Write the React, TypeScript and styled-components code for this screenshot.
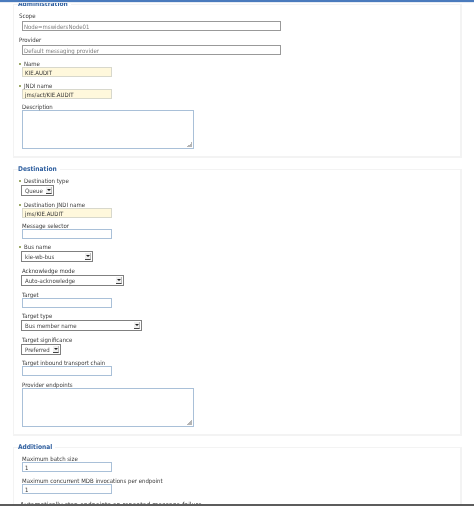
import styled, { createGlobalStyle } from "styled-components";

const GlobalStyle = createGlobalStyle`
   html, body {
      margin: 0;
      padding: 0;
      background: #fff;
   }
`;

const Page = styled.div`
   width: 474px;
   height: 506px;
   display: flex;
   flex-direction: column;
   overflow: hidden;
   background: #fff;
   font-family: "DejaVu Sans Condensed", "DejaVu Sans", Verdana, sans-serif;
   font-size: 6px;
   color: #3a3a3a;
   filter: blur(0.3px);
`;

const TopBar = styled.div`
   flex: none;
   height: 2px;
   background: #4a7bbd;
   border-bottom: 1px solid #e6ebf3;
`;

const Scroller = styled.div`
   flex: 1;
   min-height: 0;
   overflow: hidden;
   padding: 0 12px 0 13px;
`;

const Form = styled.form`
   margin-top: -4px;
   display: flex;
   flex-direction: column;
`;

const Panel = styled.fieldset<{ $last?: boolean }>`
   margin: 0 0 ${({ $last }) => ($last ? "0" : "6px")};
   padding: 3px 0 ${({ $last }) => ($last ? "0" : "7px")} 5px;
   min-width: 0;
   border: 1px solid #f3f3f3;
   border-right-width: 2px;
   border-bottom-width: 2px;
`;

const Legend = styled.legend`
   margin: 0 0 0 -1px;
   padding: 0 3px 0 0;
   font-size: 6.6px;
   line-height: 10px;
   font-weight: bold;
   color: #2f5f9f;
   background: #fff;
`;

const Field = styled.div<{ $after?: number }>`
   display: flex;
   flex-direction: column;
   align-items: flex-start;
   margin-bottom: ${({ $after }) => $after ?? 5}px;
`;

const Label = styled.label<{ $indent?: number; $gap?: number }>`
   display: block;
   position: relative;
   height: 8px;
   line-height: 7px;
   margin-left: ${({ $indent }) => $indent ?? 3}px;
   margin-bottom: ${({ $gap }) => $gap ?? -1}px;
   white-space: nowrap;
`;

const RequiredMark = styled.span`
   position: absolute;
   left: -5px;
   top: 3px;
   width: 2px;
   height: 2px;
   border-radius: 50%;
   background: #7f8f3a;
`;

const TextInput = styled.input<{ $required?: boolean }>`
   box-sizing: border-box;
   width: 90px;
   height: 10px;
   margin: 0 0 0 3px;
   padding: 0 2px;
   font: inherit;
   line-height: 8px;
   color: #333;
   border: 1px solid ${({ $required }) => ($required ? "#d8d8cc" : "#a9c0d8")};
   border-radius: 0;
   background: ${({ $required }) => ($required ? "#fff8dc" : "#fff")};
   outline: none;
`;

const ReadOnlyInput = styled(TextInput)`
   width: 259px;
   padding: 0 1px;
   color: #808080;
   border-color: #999;
`;

const TextBox = styled.textarea`
   box-sizing: border-box;
   display: block;
   width: 172px;
   height: 39px;
   margin: 0 0 0 3px;
   padding: 0;
   border: 1px solid #a9c0d8;
   border-radius: 0;
   outline: none;
   resize: none;
   background: linear-gradient(135deg, transparent 50%, #b5b5b5 50%) right 1px bottom 1px / 5px 5px no-repeat #fff;
`;

const Select = styled.div<{ $width: number }>`
   box-sizing: border-box;
   display: flex;
   align-items: center;
   justify-content: space-between;
   width: ${({ $width }) => $width}px;
   height: 11px;
   margin-left: 2px;
   padding: 0 1px 0 3px;
   border: 1px solid #808080;
   background: #fff;
   color: #444;
`;

const SelectArrow = styled.span`
   flex: none;
   box-sizing: border-box;
   display: flex;
   align-items: center;
   justify-content: center;
   width: 6px;
   height: 7px;
   background: #f0f0f0;
   border-right: 1px solid #bbb;
   border-bottom: 1px solid #444;

   &::before {
      content: "";
      border-left: 2px solid transparent;
      border-right: 2px solid transparent;
      border-top: 2px solid #222;
   }
`;

const CutOffText = styled.div`
   margin: 7px 0 0 1px;
   height: 8px;
   line-height: 8px;
   white-space: nowrap;
   font-size: 6.9px;
`;

const BottomBar = styled.div`
   flex: none;
   height: 2px;
   background: #5c5c5c;
`;

const SelectField = ({
   label,
   value,
   width,
   required,
   after,
}: {
   label: string;
   value: string;
   width: number;
   required?: boolean;
   after?: number;
}) => (
   <Field $after={after}>
      <Label $indent={required ? 5 : 3} $gap={0}>
         {required && <RequiredMark />}
         {label}
      </Label>
      <Select $width={width}>
         {value}
         <SelectArrow />
      </Select>
   </Field>
);

const InputField = ({
   label,
   value,
   required,
   after,
}: {
   label: string;
   value?: string;
   required?: boolean;
   after?: number;
}) => (
   <Field $after={after}>
      <Label $indent={required ? 5 : 3}>
         {required && <RequiredMark />}
         {label}
      </Label>
      <TextInput $required={required} defaultValue={value} />
   </Field>
);

export default function App() {
   return (
      <Page>
         <GlobalStyle />
         <TopBar />
         <Scroller>
            <Form>
               <Panel>
                  <Legend>Administration</Legend>
                  <Field>
                     <Label $indent={0} $gap={1}>Scope</Label>
                     <ReadOnlyInput readOnly defaultValue="Node=mswidersNode01" />
                  </Field>
                  <Field>
                     <Label $indent={0} $gap={1}>Provider</Label>
                     <ReadOnlyInput readOnly defaultValue="Default messaging provider" />
                  </Field>
                  <InputField label="Name" value="KIE.AUDIT" required />
                  <InputField label="JNDI name" value="jms/act/KIE.AUDIT" required after={4} />
                  <Field $after={0}>
                     <Label>Description</Label>
                     <TextBox />
                  </Field>
               </Panel>
               <Panel>
                  <Legend>Destination</Legend>
                  <SelectField label="Destination type" value="Queue" width={33} required />
                  <InputField label="Destination JNDI name" value="jms/KIE.AUDIT" required after={4} />
                  <InputField label="Message selector" after={4} />
                  <SelectField label="Bus name" value="kie-wb-bus" width={72} required />
                  <SelectField label="Acknowledge mode" value="Auto-acknowledge" width={103} />
                  <InputField label="Target" after={4} />
                  <SelectField label="Target type" value="Bus member name" width={121} />
                  <SelectField label="Target significance" value="Preferred" width={40} after={4} />
                  <InputField label="Target inbound transport chain" />
                  <Field $after={0}>
                     <Label>Provider endpoints</Label>
                     <TextBox />
                  </Field>
               </Panel>
               <Panel $last>
                  <Legend>Additional</Legend>
                  <InputField label="Maximum batch size" value="1" />
                  <InputField label="Maximum concurrent MDB invocations per endpoint" value="1" />
                  <CutOffText>Automatically stop endpoints on repeated message failure</CutOffText>
               </Panel>
            </Form>
         </Scroller>
         <BottomBar />
      </Page>
   );
}
